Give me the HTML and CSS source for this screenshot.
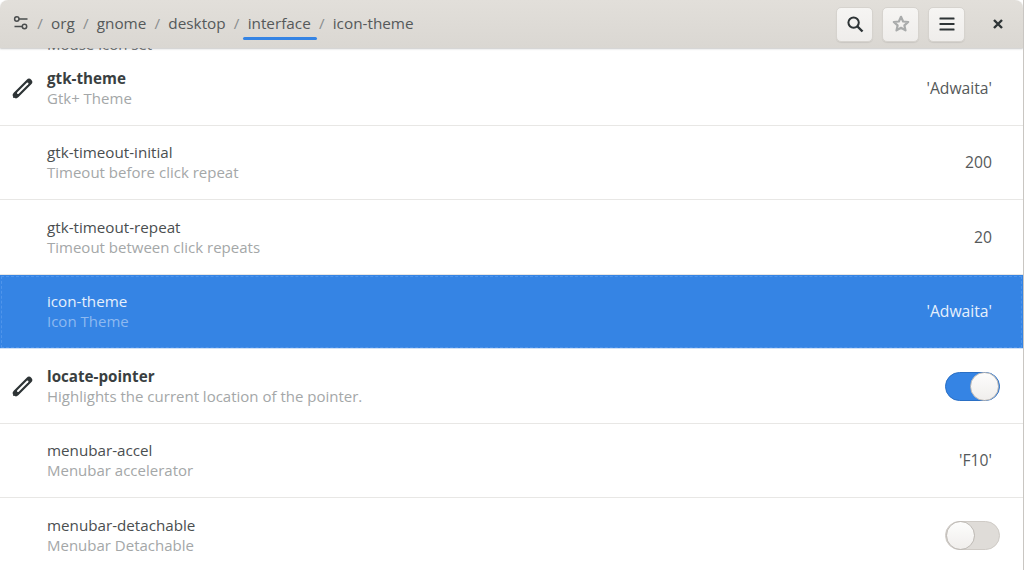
FILE: index.html
```html
<!DOCTYPE html>
<html lang="en">
<head>
<meta charset="utf-8">
<title>dconf Editor</title>
<link rel="stylesheet" href="styles.css">
</head>
<body>
<div class="window">
  <header class="headerbar">
    <nav class="path">
      <svg class="path-icon" width="16" height="16" viewBox="0 0 16 16" fill="none" stroke="#4a4d4e" stroke-width="1.500"><circle cx="3.800" cy="4" r="2.200"/><path d="M6 4h8.500M1.500 11.500H9"/><circle cx="11.500" cy="11.500" r="2.200"/></svg>
      <span class="sep">/</span><span class="crumb">org</span>
      <span class="sep">/</span><span class="crumb">gnome</span>
      <span class="sep">/</span><span class="crumb">desktop</span>
      <span class="sep">/</span><span class="crumb current">interface</span>
      <span class="sep">/</span><span class="crumb">icon-theme</span>
    </nav>
    <div class="actions">
      <button class="btn"><svg width="18" height="18" viewBox="0 0 18 18" fill="none" stroke="#2e3436" stroke-width="2"><circle cx="7.600" cy="7.600" r="5.200"/><path d="M11.500 11.500l5 5" stroke-width="2.400"/></svg></button>
      <button class="btn dim"><svg width="18" height="18" viewBox="0 0 18 18" fill="none" stroke="#a9abab" stroke-width="2.200" stroke-linejoin="round"><path d="M9 1.800l2.100 4.700 5.100.5-3.800 3.400 1.100 5-4.500-2.600-4.500 2.600 1.100-5L1.800 7l5.100-.5z"/></svg></button>
      <button class="btn"><svg width="18" height="18" viewBox="0 0 18 18" fill="#2e3436"><rect x="1.500" y="2.500" width="15" height="2" rx=".5"/><rect x="1.500" y="8" width="15" height="2" rx=".5"/><rect x="1.500" y="13.500" width="15" height="2" rx=".5"/></svg></button>
      <button class="close"><svg width="12" height="12" viewBox="0 0 12 12" stroke="#2e3436" stroke-width="2.400"><path d="M2 2l8 8M10 2l-8 8"/></svg></button>
    </div>
  </header>
  <main class="list">
    <div class="row clipped"><div class="text"><div class="desc">Mouse icon set</div></div></div>
    <div class="row">
      <svg class="pencil" width="24" height="24" viewBox="0 0 24 24" fill="none"><path d="M5 19L18 6" stroke="#2e3436" stroke-width="6.400" stroke-linecap="round"/><path d="M2 22l1.500-5.500 4 4z" fill="#2e3436"/><path d="M7 17l9.500-9.500" stroke="#fff" stroke-width="2" stroke-linecap="round"/></svg>
      <div class="text"><div class="name bold">gtk-theme</div><div class="desc">Gtk+ Theme</div></div>
      <div class="value">'Adwaita'</div>
    </div>
    <div class="row">
      <div class="text"><div class="name">gtk-timeout-initial</div><div class="desc">Timeout before click repeat</div></div>
      <div class="value">200</div>
    </div>
    <div class="row">
      <div class="text"><div class="name">gtk-timeout-repeat</div><div class="desc">Timeout between click repeats</div></div>
      <div class="value">20</div>
    </div>
    <div class="row selected">
      <div class="text"><div class="name">icon-theme</div><div class="desc">Icon Theme</div></div>
      <div class="value">'Adwaita'</div>
    </div>
    <div class="row">
      <svg class="pencil" width="24" height="24" viewBox="0 0 24 24" fill="none"><path d="M5 19L18 6" stroke="#2e3436" stroke-width="6.400" stroke-linecap="round"/><path d="M2 22l1.500-5.500 4 4z" fill="#2e3436"/><path d="M7 17l9.500-9.500" stroke="#fff" stroke-width="2" stroke-linecap="round"/></svg>
      <div class="text"><div class="name bold">locate-pointer</div><div class="desc">Highlights the current location of the pointer.</div></div>
      <div class="switch on"><span class="knob"></span></div>
    </div>
    <div class="row">
      <div class="text"><div class="name">menubar-accel</div><div class="desc">Menubar accelerator</div></div>
      <div class="value">'F10'</div>
    </div>
    <div class="row">
      <div class="text"><div class="name">menubar-detachable</div><div class="desc">Menubar Detachable</div></div>
      <div class="switch"><span class="knob"></span></div>
    </div>
  </main>
</div>
</body>
</html>
```
FILE: styles.css
```css
* { box-sizing: border-box; }
html, body { margin: 0; height: 100%; overflow: hidden; }
body { font-family: "Open Sans", "Noto Sans", sans-serif; font-size: 15px; color: #2e3436; background: #fff; }
.window { width: 1024px; height: 570px; display: flex; flex-direction: column; overflow: hidden; border-right: 1px solid #c9c6c2; }
.headerbar { height: 48px; flex: none; display: flex; align-items: center; justify-content: space-between; background: linear-gradient(#e2dfda, #dad7d2); border-radius: 8px 8px 0 0; padding: 0 13px 0 13px; box-shadow: 0 1px 2px rgba(0,0,0,.22); position: relative; z-index: 1; }
.path { display: flex; align-items: center; gap: 8.200px; margin-bottom: 2px; color: #55595a; font-size: 15.300px; }
.sep { color: #8a8d8e; }
.crumb { position: relative; }
.current::after { content: ""; position: absolute; left: -5px; right: -6px; top: 24px; height: 3px; border-radius: 2px; background: #3584e4; }
.actions { display: flex; align-items: center; gap: 9px; }
.btn { width: 37px; height: 35px; padding: 0; display: flex; align-items: center; justify-content: center; border: 1px solid #d6d3ce; border-radius: 5px; background: linear-gradient(#f6f5f3, #efedeb); box-shadow: 0 1px 1px rgba(0,0,0,.08); }
.close { width: 24px; height: 24px; margin-left: 12px; padding: 0; display: flex; align-items: center; justify-content: center; border: 0; background: none; }
.list { flex: 1; overflow: hidden; display: flex; flex-direction: column; }
.row { height: 74.500px; flex: none; display: flex; align-items: center; padding: 0 31px 0 47px; border-bottom: 1px solid #e8e7e5; position: relative; }
.clipped { height: 3px; align-items: flex-end; overflow: hidden; border: 0; }
.clipped .desc { line-height: 14px; color: #777a7b; }
.text { flex: 1; }
.name { font-size: 15.200px; line-height: 20px; color: #4a4e50; }
.bold { font-weight: 700; color: #3a3f41; }
.desc { font-size: 15px; line-height: 20px; color: #a4a7a8; }
.value { font-size: 15.700px; color: #55595a; margin-bottom: 0.500px; }
.pencil { position: absolute; left: 11px; top: 25px; }
.selected { background: #3584e4; border-bottom-color: #cfe0f6; outline: 1px dashed #4f94ea; outline-offset: -2px; }
.selected .name { color: #e6f0fc; }
.selected .desc { color: #8db9f0; }
.selected .value { color: #e6f0fc; }
.switch { width: 55px; height: 29px; margin: 2px -8px 0 0; border-radius: 15px; background: #dfdcd8; border: 1px solid #cfcbc6; display: flex; align-items: center; }
.switch.on { background: #3584e4; border-color: #2a6fc4; justify-content: flex-end; }
.knob { width: 29px; height: 29px; flex: none; border-radius: 50%; background: linear-gradient(#fdfdfc, #f0eeec); border: 1px solid #bdb9b4; }
```
